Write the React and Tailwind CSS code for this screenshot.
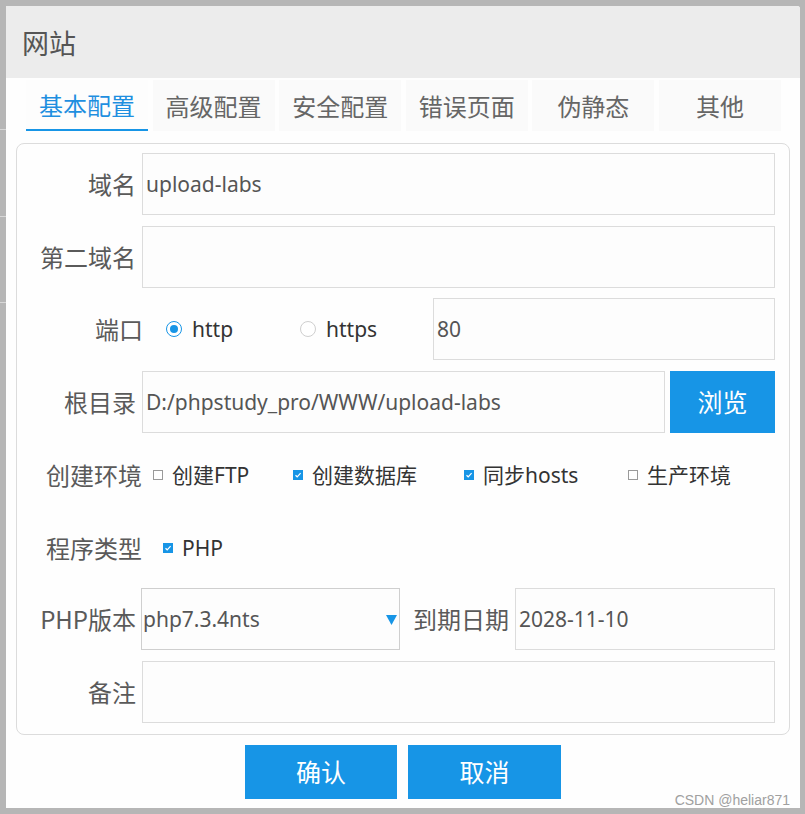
import React from "react";

const FONT = { fontFamily: "'Noto Sans', 'Noto Sans CJK SC', sans-serif" };
const CJK = { fontFamily: "'Noto Sans CJK SC', 'Noto Sans', sans-serif" };

function Label({ children, className = "" }) {
  return (
    <div className={"shrink-0 text-right text-[24px] text-[#5a5a5a] leading-none " + className} style={CJK}>
      {children}
    </div>
  );
}

function Field({ value, className = "" }) {
  return (
    <div className={"h-[62px] border border-[#dcdcdc] bg-[#fdfdfd] flex items-center pl-[3px] pt-[2px] text-[21px] text-[#555]" + " " + className} style={FONT}>
      {value}
    </div>
  );
}

function Radio({ checked }) {
  return (
    <span className={"w-[16px] h-[16px] rounded-full border flex items-center justify-center bg-white " + (checked ? "border-[#1795e6]" : "border-[#cfcfcf]")}>
      {checked && <span className="w-[8px] h-[8px] rounded-full bg-[#1795e6]" />}
    </span>
  );
}

function Check({ checked }) {
  return checked ? (
    <span className="w-[10px] h-[10px] bg-[#1795e6] flex items-center justify-center shrink-0">
      <svg width="8" height="8" viewBox="0 0 8 8">
        <path d="M1.5 4.2 L3.2 5.8 L6.6 2.2" stroke="#fff" strokeWidth="1.2" fill="none" />
      </svg>
    </span>
  ) : (
    <span className="w-[10px] h-[10px] border border-[#9a9a9a] bg-white shrink-0" />
  );
}

function CheckItem({ checked, label, className = "" }) {
  return (
    <div className={"flex items-center shrink-0 " + className}>
      <Check checked={checked} />
      <span className="ml-[9px] text-[21px] text-[#333] leading-none" style={FONT}>{label}</span>
    </div>
  );
}

export default function App() {
  const tabs = ["基本配置", "高级配置", "安全配置", "错误页面", "伪静态", "其他"];
  return (
    <div className="relative w-[805px] h-[814px] bg-[#b6b6b6] pt-[6px] pl-[6px] overflow-hidden">
      {/* background app hints */}
      <div className="absolute left-0 top-[129px] w-[6px] h-[1px] bg-[#d8d8d8]" />
      <div className="absolute left-0 top-[216px] w-[6px] h-[1px] bg-[#d8d8d8]" />
      <div className="absolute left-0 top-[302px] w-[6px] h-[1px] bg-[#d8d8d8]" />

      <div className="relative w-[794px] h-[802px] bg-[#fefefe] rounded-tr-[3px] flex flex-col">
        {/* header */}
        <div className="h-[72px] bg-[#ececec] flex items-center pl-[16px] rounded-tr-[3px]">
          <span className="text-[27px] text-[#555] leading-none" style={CJK}>网站</span>
        </div>

        {/* tabs */}
        <div className="mt-[2px] pl-[20px] flex gap-[4.6px]">
          {tabs.map((t, i) => (
            <div
              key={t}
              className={
                "w-[122px] h-[51px] flex items-center justify-center text-[24px] leading-none " +
                (i === 0 ? "text-[#1f8fe0] border-b-2 border-[#1795e6] bg-[#fdfdfd]" : "text-[#666] bg-[#fafafa]")
              }
              style={CJK}
            >
              {t}
            </div>
          ))}
        </div>

        {/* form panel */}
        <div className="mt-[12px] mx-[10px] h-[592px] border border-[#dcdcdc] rounded-[8px] pt-[9px] pr-[14px] flex flex-col gap-[10.5px]">
          {/* 域名 */}
          <div className="flex items-center">
            <Label className="w-[119px] mr-[6px]">域名</Label>
            <Field value="upload-labs" className="flex-1" />
          </div>
          {/* 第二域名 */}
          <div className="flex items-center">
            <Label className="w-[119px] mr-[6px]">第二域名</Label>
            <Field value="" className="flex-1" />
          </div>
          {/* 端口 */}
          <div className="flex items-center">
            <Label className="w-[126px]">端口</Label>
            <div className="ml-[23px] w-[134px] flex items-center">
              <Radio checked />
              <span className="ml-[10px] text-[21px] text-[#333] leading-none" style={FONT}>http</span>
            </div>
            <div className="w-[133px] flex items-center">
              <Radio />
              <span className="ml-[10px] text-[21px] text-[#333] leading-none" style={FONT}>https</span>
            </div>
            <Field value="80" className="flex-1" />
          </div>
          {/* 根目录 */}
          <div className="flex items-center">
            <Label className="w-[119px] mr-[6px]">根目录</Label>
            <Field value="D:/phpstudy_pro/WWW/upload-labs" className="flex-1" />
            <div className="ml-[5px] w-[105px] h-[62px] bg-[#1795e6] text-white text-[25px] flex items-center justify-center" style={CJK}>
              浏览
            </div>
          </div>
          {/* 创建环境 */}
          <div className="h-[62px] flex items-center pt-[2px]">
            <Label className="w-[125px]">创建环境</Label>
            <CheckItem className="ml-[11px] w-[140px]" label="创建FTP" />
            <CheckItem className="w-[171px]" checked label="创建数据库" />
            <CheckItem className="w-[164px]" checked label="同步hosts" />
            <CheckItem label="生产环境" />
          </div>
          {/* 程序类型 */}
          <div className="h-[62px] flex items-center pt-[3px]">
            <Label className="w-[125px]">程序类型</Label>
            <CheckItem className="ml-[21px]" checked label="PHP" />
          </div>
          {/* PHP版本 */}
          <div className="flex items-center">
            <Label className="w-[119px] mr-[5px]">PHP版本</Label>
            <div className="w-[259px] h-[62px] border border-[#cfcfcf] bg-[#fdfdfd] flex items-center justify-between pl-[1px] pr-[2px] pt-[2px] text-[21px] text-[#555]" style={FONT}>
              <span>php7.3.4nts</span>
              <svg width="11" height="10" viewBox="0 0 11 10">
                <polygon points="0,0 11,0 5.5,10" fill="#1795e6" />
              </svg>
            </div>
            <Label className="ml-[13px] mr-[6px]">到期日期</Label>
            <Field value="2028-11-10" className="flex-1" />
          </div>
          {/* 备注 */}
          <div className="flex items-center">
            <Label className="w-[119px] mr-[6px]">备注</Label>
            <Field value="" className="flex-1" />
          </div>
        </div>

        {/* buttons */}
        <div className="mt-[10px] flex justify-center gap-[11px]">
          <div className="w-[152px] h-[54px] bg-[#1795e6] text-white text-[25px] flex items-center justify-center" style={CJK}>确认</div>
          <div className="w-[153px] h-[54px] bg-[#1795e6] text-white text-[25px] flex items-center justify-center" style={CJK}>取消</div>
        </div>

        <div className="absolute right-[10px] bottom-[1px] text-[14px] text-[#a0a0a0] leading-none" style={{ fontFamily: "'Liberation Sans', Arial, sans-serif" }}>
          CSDN @heliar871
        </div>
      </div>
    </div>
  );
}
